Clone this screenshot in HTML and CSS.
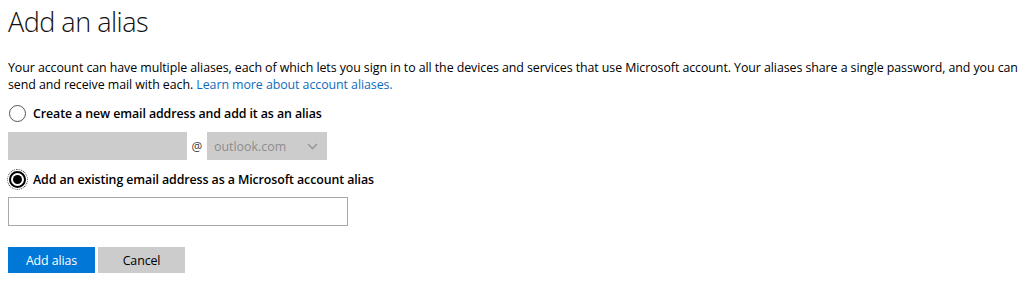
FILE: index.html
```html
<!DOCTYPE html>
<html lang="en">
<head>
    <meta charset="UTF-8">
    <title>Add an alias</title>
    <link rel="stylesheet" href="styles.css">
</head>
<body>
    <div class="page">
        <h1>Add an alias</h1>
        <p class="intro">Your account can have multiple aliases, each of which lets you sign in to all the devices and services that use Microsoft account. Your aliases share a single password, and you can send and receive mail with each. <a href="#">Learn more about account aliases.</a></p>

        <label class="option">
            <input type="radio" name="aliasType" value="new">
            <span class="radio"></span>
            <span class="option-text">Create a new email address and add it as an alias</span>
        </label>
        <div class="new-row">
            <input type="text" class="alias-name" disabled>
            <span class="at">@</span>
            <div class="domain-select">
                <span>outlook.com</span>
                <svg width="11" height="7" viewBox="0 0 11 7"><path d="M1 1l4.5 4.5L10 1" fill="none" stroke="#9a9a9a" stroke-width="1.6"/></svg>
            </div>
        </div>

        <label class="option">
            <input type="radio" name="aliasType" value="existing" checked>
            <span class="radio focused"></span>
            <span class="option-text">Add an existing email address as a Microsoft account alias</span>
        </label>
        <input type="text" class="alias-existing">

        <div class="actions">
            <button class="btn primary">Add alias</button>
            <button class="btn">Cancel</button>
        </div>
    </div>
</body>
</html>
```

FILE: styles.css
```css
body {
    margin: 0;
    background: #fff;
    color: #000;
    font-family: "Open Sans", "Noto Sans", Arial, sans-serif;
}

.page {
    padding: 0 4px 0 8px;
}

h1 {
    margin: 0;
    padding-top: 3px;
    font-size: 27px;
    font-weight: 300;
    line-height: 38px;
    letter-spacing: -0.5px;
    color: #111;
}

.intro {
    margin: 18px 0 0;
    font-size: 12.4px;
    line-height: 17px;
    letter-spacing: -0.07px;
}

.intro a {
    color: #0f6cbd;
    text-decoration: none;
}

.option {
    display: flex;
    align-items: center;
    gap: 7px;
    height: 20px;
    font-size: 12.4px;
    font-weight: 600;
    letter-spacing: -0.1px;
}

.option:first-of-type {
    margin-top: 10px;
}

.option input {
    display: none;
}

.radio {
    position: relative;
    box-sizing: border-box;
    width: 17px;
    height: 17px;
    margin-left: 1px;
    border: 1px solid #555;
    border-radius: 50%;
    background: #fff;
}

.option input:checked + .radio {
    border: 2px solid #000;
}

.option input:checked + .radio::after {
    content: "";
    position: absolute;
    left: 2px;
    top: 2px;
    width: 9px;
    height: 9px;
    border-radius: 50%;
    background: #000;
}

.radio.focused {
    outline: 1px dotted #333;
    outline-offset: 1px;
}

.new-row {
    display: flex;
    align-items: center;
    margin-top: 9px;
    margin-bottom: 9px;
}

.alias-name {
    width: 179px;
    height: 28px;
    box-sizing: border-box;
    border: none;
    background: #cccccc;
}

.at {
    width: 20px;
    text-align: center;
    font-size: 12px;
    color: #444;
}

.domain-select {
    display: flex;
    align-items: center;
    justify-content: space-between;
    box-sizing: border-box;
    width: 120px;
    height: 28px;
    padding: 0 9px 0 7px;
    background: #cccccc;
    color: #8c8c8c;
    font-size: 12.4px;
}

.alias-existing {
    display: block;
    width: 340px;
    height: 29px;
    box-sizing: border-box;
    margin-top: 8px;
    border: 1px solid #a8a8a8;
    background: #fff;
}

.actions {
    display: flex;
    gap: 3px;
    margin-top: 21px;
}

.btn {
    width: 87px;
    height: 26px;
    border: none;
    background: #cccccc;
    color: #000;
    font-family: inherit;
    font-size: 12.4px;
    letter-spacing: -0.1px;
}

.btn.primary {
    background: #0078d7;
    color: #fff;
}
```
